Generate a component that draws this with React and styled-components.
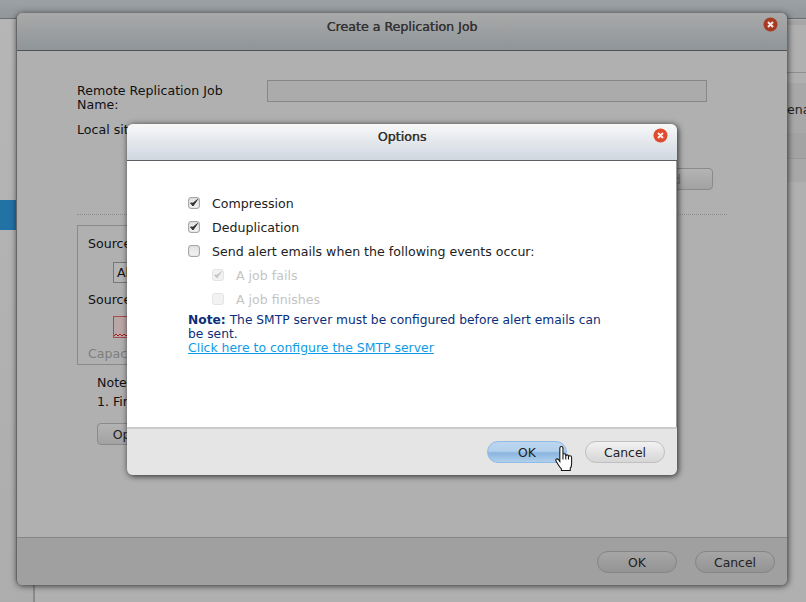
import React from 'react';
import styled, { createGlobalStyle } from 'styled-components';

const Global = createGlobalStyle`
  html, body { margin: 0; padding: 0; background: #b0b0b0; }
  body { font-family: "DejaVu Sans", Verdana, sans-serif; font-size: 12.6px; color: #111; }
  * { box-sizing: border-box; }
`;

const Page = styled.div`
  position: relative;
  width: 806px;
  height: 602px;
  overflow: hidden;
  display: flex;
  flex-direction: column;
  background: #b0b0b0;
`;

/* app behind the dialogs */
const TopBar = styled.div`
  height: 19px;
  flex: none;
  background: linear-gradient(#9ca1a6, #91969a);
  border-bottom: 1px solid #6a6d70;
`;
const Workspace = styled.div`
  flex: 1;
  display: flex;
`;
const Sidebar = styled.div`
  width: 35px;
  flex: none;
  padding-top: 181px;
  background: linear-gradient(#b6b6b6, #adadad);
  border-right: 2px solid #8a8a8a;
`;
const SideItem = styled.div`
  height: 30px;
  background: #2272a5;
`;
const Content = styled.div`
  flex: 1;
  display: flex;
  flex-direction: column;
  background: #b0b0b0;
`;
const ContentHead = styled.div`
  height: 53px;
  margin-top: 1px;
  border-bottom: 1px solid #8e8e8e;
  background: linear-gradient(#a6a6a6 5px, #b0b0b0 5px);
`;
const Band = styled.div`
  height: ${p => p.$h}px;
  margin-top: ${p => p.$gap || 0}px;
  padding: ${p => p.$textDrop || 0}px 0 0 752px;
  background: ${p => p.$bg};
  border-bottom: 1px solid ${p => p.$line || 'transparent'};
  display: flex;
  align-items: center;
  white-space: nowrap;
  color: #222;
`;

/* dialogs */
const Win = styled.div`
  position: absolute;
  left: ${p => p.$x}px;
  top: ${p => p.$y}px;
  width: ${p => p.$w}px;
  height: ${p => p.$h}px;
  display: flex;
  flex-direction: column;
  border-radius: 6px;
  box-shadow: 1px 1px 6px rgba(0, 0, 0, ${p => p.$shadow});
  overflow: hidden;
`;
const OuterWin = styled(Win)`
  background: #b0b0b0;
  border-left: 1px solid #666;
`;
const TitleBar = styled.div`
  position: relative;
  height: ${p => p.$h}px;
  flex: none;
  display: flex;
  align-items: center;
  justify-content: center;
  padding-bottom: 11px;
  background: ${p => p.$bg};
  border-bottom: 1px solid ${p => p.$line};
  color: #333;
  text-shadow: 0.4px 0 0 #333;
`;
const CloseBtn = styled.svg`
  position: absolute;
  right: ${p => p.$right}px;
  top: 4px;
  width: 15px;
  height: 15px;
`;

const OuterBody = styled.div`
  flex: 1;
  padding: 29px 60px 0 60px;
  overflow: hidden;
`;
const FormRow = styled.div`
  display: grid;
  grid-template-columns: 190px 440px;
  line-height: 14px;
`;
const FormLabel = styled.div`
  width: 160px;
  margin-top: 4px;
`;
const DimInput = styled.div`
  height: 22px;
  background: #ababab;
  border: 1px solid #878787;
`;
const LocalRow = styled.div`
  margin-top: 11px;
  line-height: 14px;
`;
const BrowseRow = styled.div`
  display: flex;
  justify-content: flex-end;
  width: 636px;
  margin-top: 31px;
`;
const DimButton = styled.div`
  width: ${p => p.$w}px;
  height: 22px;
  display: flex;
  align-items: center;
  justify-content: ${p => p.$center ? 'center' : 'flex-end'};
  padding-right: ${p => p.$center ? 0 : 31}px;
  border: 1px solid #8a8a8a;
  border-radius: 4px;
  background: linear-gradient(#b4b4b4, #a2a2a2);
  color: ${p => p.$center ? '#222' : '#7d7d7d'};
`;
const DottedRule = styled.div`
  width: 650px;
  margin-top: 24px;
  border-top: 1px dotted #8a8a8a;
`;
const SourceBox = styled.div`
  width: 400px;
  height: 140px;
  margin-top: 10px;
  padding: 11px 10px 0;
  border: 1px solid #8a8a8a;
  line-height: 14px;
`;
const DimSelect = styled.div`
  width: 120px;
  height: 21px;
  margin: 11px 0 0 25px;
  padding-left: 3px;
  display: flex;
  align-items: center;
  border: 1px solid #777;
  background: #b4b4b4;
`;
const SourceLabel = styled.div`
  margin-top: 10px;
`;
const FolderBar = styled.div`
  width: 120px;
  height: 22px;
  margin: 9px 0 0 25px;
  display: flex;
  align-items: flex-end;
  border: 1px solid #a94b4b;
  background: #b9a6a6;
`;
const Capacity = styled.div`
  margin-top: 9px;
  color: #7e7e7e;
`;
const NoteBlock = styled.div`
  margin: 11px 0 0 20px;
  line-height: 14px;
`;
const NoteLine = styled.div`
  margin-bottom: 5px;
`;
const OptionsRow = styled.div`
  margin: 14px 0 0 20px;
`;
const Footer = styled.div`
  flex: none;
  height: ${p => p.$h}px;
  display: flex;
  justify-content: flex-end;
  gap: 18px;
  padding: ${p => p.$top}px 12px 0 0;
  background: ${p => p.$bg};
  border-top: ${p => p.$border};
`;
const Pill = styled.div`
  width: 80px;
  height: 22px;
  display: flex;
  align-items: center;
  justify-content: center;
  border-radius: 11px;
  border: 1px solid ${p => p.$line};
  background: ${p => p.$bg};
  color: ${p => p.$color};
  font-size: 12.4px;
`;

const InnerBody = styled.div`
  flex: 1;
  padding: 30px 60px 0 61px;
  background: #fff;
  border-right: 1px solid #999;
`;
const OptionRow = styled.div`
  display: flex;
  align-items: center;
  height: 24px;
  padding-left: ${p => p.$indent ? 24 : 0}px;
  color: ${p => p.$off ? '#c4c4c4' : '#222'};
`;
const Box = styled.span`
  width: 12px;
  height: 12px;
  flex: none;
  margin-right: 12px;
  display: flex;
  align-items: center;
  justify-content: center;
  border-radius: 3px;
  border: 1px solid ${p => p.$off ? '#e4e4e4' : '#a8a8a8'};
  background: ${p => p.$off ? '#f2f2f2' : 'linear-gradient(#e4e4e4, #f2f2f2)'};
  box-shadow: ${p => p.$off ? 'none' : 'inset 0 0 1px #999'};
`;
const Note = styled.div`
  margin-top: 2px;
  width: 424px;
  line-height: 14px;
  font-size: 12.25px;
  color: #0a2f7a;
`;
const NoteTag = styled.b`
  font-weight: bold;
`;
const ConfigLink = styled.a`
  display: block;
  color: #0d9be8;
  text-decoration: underline;
  font-size: 12.45px;
  line-height: 14px;
`;
const Cursor = styled.svg`
  position: absolute;
  left: 555px;
  top: 446px;
  width: 18px;
  height: 25px;
`;

function Close({ right, fill }) {
  return (
    <CloseBtn $right={right} viewBox="0 0 15 15">
      <circle cx="7.5" cy="7.5" r="7" fill={fill} />
      <path d="M5 5 L10 10 M10 5 L5 10" stroke="#fff" strokeWidth="2" opacity="0.9" />
    </CloseBtn>
  );
}

function Check({ color }) {
  return (
    <svg width="10" height="10" viewBox="0 0 10 10">
      <path d="M1.5 5 L4 8 L8.5 1.5 L4 5.2 Z" fill={color} stroke={color} strokeWidth="1" />
    </svg>
  );
}

export default function App() {
  return (
    <Page>
      <Global />
      <TopBar />
      <Workspace>
        <Sidebar>
          <SideItem />
        </Sidebar>
        <Content>
          <ContentHead />
          <Band $h={50} $gap={10} $textDrop={4} $bg="#a8a8a8">enabled</Band>
          <Band $h={26} $bg="#a3a3a3" $line="#9a9a9a" />
          <Band $h={23} $bg="#a8a8a8" />
        </Content>
      </Workspace>

      <OuterWin $x={16} $y={13} $w={771} $h={572} $shadow={0.7}>
        <TitleBar $h={38} $bg="linear-gradient(#a9a9a9, #8f9599)" $line="#4f5357">
          Create a Replication Job
          <Close right={9} fill="#a93a22" />
        </TitleBar>
        <OuterBody>
          <FormRow>
            <FormLabel>Remote Replication Job Name:</FormLabel>
            <DimInput />
          </FormRow>
          <LocalRow>Local site:</LocalRow>
          <BrowseRow>
            <DimButton $w={110}>Add</DimButton>
          </BrowseRow>
          <DottedRule />
          <SourceBox>
            <div>Source device:</div>
            <DimSelect>All</DimSelect>
            <SourceLabel>Source folder:</SourceLabel>
            <FolderBar>
              <svg width="118" height="4" viewBox="0 0 118 4">
                <path d="M0 3 L2 1 L4 3 L6 1 L8 3 L10 1 L12 3 L14 1" stroke="#b02020" fill="none" />
              </svg>
            </FolderBar>
            <Capacity>Capacity:</Capacity>
          </SourceBox>
          <NoteBlock>
            <NoteLine>Note:</NoteLine>
            <NoteLine>1. First</NoteLine>
          </NoteBlock>
          <OptionsRow>
            <DimButton $w={80} $center>Options</DimButton>
          </OptionsRow>
        </OuterBody>
        <Footer $h={48} $top={13} $bg="#a0a0a0" $border="1px solid #868686">
          <Pill $line="#858585" $bg="linear-gradient(#a6a6a6, #949494)" $color="#222">OK</Pill>
          <Pill $line="#858585" $bg="linear-gradient(#a6a6a6, #949494)" $color="#222">Cancel</Pill>
        </Footer>
      </OuterWin>

      <Win $x={127} $y={124} $w={550} $h={351} $shadow={0.8}>
        <TitleBar $h={37} $bg="linear-gradient(#f8f8f8, #cfd7e0)" $line="#5c6064">
          Options
          <Close right={9} fill="#e04a2d" />
        </TitleBar>
        <InnerBody>
          <OptionRow>
            <Box><Check color="#333" /></Box>Compression
          </OptionRow>
          <OptionRow>
            <Box><Check color="#333" /></Box>Deduplication
          </OptionRow>
          <OptionRow>
            <Box />Send alert emails when the following events occur:
          </OptionRow>
          <OptionRow $indent $off>
            <Box $off><Check color="#c8c8c8" /></Box>A job fails
          </OptionRow>
          <OptionRow $indent $off>
            <Box $off />A job finishes
          </OptionRow>
          <Note>
            <NoteTag>Note:</NoteTag> The SMTP server must be configured before alert emails can be sent.
          </Note>
          <ConfigLink href="#">Click here to configure the SMTP server</ConfigLink>
        </InnerBody>
        <Footer $h={48} $top={12} $bg="#e5e5e5" $border="2px solid #cccccc">
          <Pill $line="#8fbbe6" $bg="linear-gradient(#bcd6ef 0%, #b3d0ec 45%, #8ab6e0 55%, #b0cfeb 100%)" $color="#222">OK</Pill>
          <Pill $line="#c0c0c0" $bg="linear-gradient(#f2f2f2, #d6d6d6)" $color="#222">Cancel</Pill>
        </Footer>
      </Win>

      <Cursor viewBox="0 0 17 24">
        <path
          d="M4.5 2 Q4.5 .5 6 .5 Q7.5 .5 7.5 2 V8.5 Q7.5 7.5 9 7.5 Q10.2 7.5 10.2 8.8 V9.5 Q10.5 8.5 11.6 8.5 Q12.8 8.5 12.8 10 Q13.2 9.3 14.2 9.3 Q15.8 9.3 15.8 11 V17 Q15.8 20 14.5 21.5 V23.5 H6 V22 Q4.5 20.5 3 18 L.8 14.5 Q.2 13 1.3 12.5 Q2.5 12 3.5 13.5 L4.5 15 Z"
          fill="#fff"
          stroke="#111"
          strokeWidth="1"
        />
        <path d="M7.5 8.5 V13 M10.2 9 V13 M12.8 10 V13" stroke="#111" strokeWidth="1" fill="none" />
      </Cursor>
    </Page>
  );
}
